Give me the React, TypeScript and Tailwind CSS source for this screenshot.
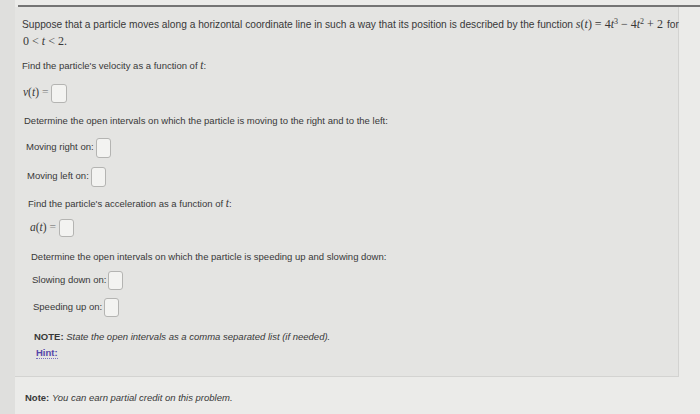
import React from "react";

const Box = ({ w = 15, h = 19 }: { w?: number; h?: number }) => (
  <span
    className="inline-block bg-[#f3f3f1] border border-[#b4b4b2] rounded-[3px] align-middle"
    style={{ width: w, height: h }}
  />
);

const M = ({ children }: { children: React.ReactNode }) => (
  <span className="font-['Liberation_Serif',serif] italic text-[11.5px]">{children}</span>
);
const R = ({ children }: { children: React.ReactNode }) => (
  <span className="font-['Liberation_Serif',serif] text-[11.5px]">{children}</span>
);
const M2 = ({ children }: { children: React.ReactNode }) => (
  <span className="font-['Liberation_Serif',serif] italic text-[12px]">{children}</span>
);
const R2 = ({ children }: { children: React.ReactNode }) => (
  <span className="font-['Liberation_Serif',serif] text-[12px]">{children}</span>
);

export default function App() {
  return (
    <div className="w-[700px] h-[414px] bg-[#ebebe9] flex overflow-hidden font-['Liberation_Sans',Arial,sans-serif] text-[#383838] text-[9.5px]">
      <div className="w-[15px] shrink-0 bg-[#dfdfdd]" />
      <div className="flex-1 flex flex-col">
        <div className="h-[5px]" />
        <div className="h-[1.5px] bg-[#747474] ml-[3px]" />
        <div className="w-[664px] h-[370px] bg-[#e4e4e2] border-r border-b border-[#d3d3d1] pt-[9px] pl-[7px] flex flex-col items-start">
          <div className="leading-[16px]">
            <div className="whitespace-nowrap text-[10.2px]">
              Suppose that a particle moves along a horizontal coordinate line in such a way that its position is described by the function{" "}
              <M2>s</M2>
              <R2>(</R2>
              <M2>t</M2>
              <R2>) = 4</R2>
              <M2>t</M2>
              <sup className="font-['Liberation_Serif',serif] text-[8px]">3</sup>
              <R2> − 4</R2>
              <M2>t</M2>
              <sup className="font-['Liberation_Serif',serif] text-[8px]">2</sup>
              <R2> + 2</R2>
              <span className="ml-[4px]">for</span>
            </div>
            <div className="ml-[1px]">
              <R2>0 &lt; </R2>
              <M2>t</M2>
              <R2> &lt; 2.</R2>
            </div>
          </div>

          <div className="mt-[8px] leading-[14px]">
            Find the particle's velocity as a function of <M>t</M>:
          </div>

          <div className="mt-[11px] ml-[1px] h-[19px] flex items-center gap-[3px]">
            <span>
              <M>v</M>
              <R>(</R>
              <M>t</M>
              <R>)</R>
              <span className="font-['Liberation_Serif',serif] text-[11.5px] text-[#8a8a8a]"> =</span>
            </span>
            <Box w={16} />
          </div>

          <div className="mt-[11px] ml-[2px] leading-[14px]">
            Determine the open intervals on which the particle is moving to the right and to the left:
          </div>

          <div className="mt-[10px] ml-[4px] h-[20px] flex items-center gap-[2px]">
            <span>Moving right on:</span>
            <Box w={15} h={20} />
          </div>

          <div className="mt-[9px] ml-[5px] h-[20px] flex items-center gap-[2px]">
            <span>Moving left on:</span>
            <Box w={15} h={20} />
          </div>

          <div className="mt-[9px] ml-[6px] leading-[14px]">
            Find the particle's acceleration as a function of <M>t</M>:
          </div>

          <div className="mt-[8px] ml-[8px] h-[18px] flex items-center gap-[3px]">
            <span>
              <M>a</M>
              <R>(</R>
              <M>t</M>
              <R>)</R>
              <span className="font-['Liberation_Serif',serif] text-[11.5px] text-[#8a8a8a]"> =</span>
            </span>
            <Box w={15} h={18} />
          </div>

          <div className="mt-[13px] ml-[9px] leading-[14px]">
            Determine the open intervals on which the particle is speeding up and slowing down:
          </div>

          <div className="mt-[7px] ml-[10px] h-[19px] flex items-center gap-[2px]">
            <span>Slowing down on:</span>
            <Box w={15} h={19} />
          </div>

          <div className="mt-[8px] ml-[11px] h-[19px] flex items-center gap-[2px]">
            <span>Speeding up on:</span>
            <Box w={15} h={19} />
          </div>

          <div className="mt-[13px] ml-[12px] leading-[14px]">
            <span className="font-bold">NOTE:</span>{" "}
            <span className="italic">State the open intervals as a comma separated list (if needed).</span>
          </div>

          <div className="mt-[2px] ml-[14px] leading-[14px]">
            <span className="font-bold text-[#5446a8] border-b border-dotted border-[#7a70c0]">Hint:</span>
          </div>
        </div>

        <div className="mt-[14px] ml-[10px] leading-[14px]">
          <span className="font-bold">Note:</span>{" "}
          <span className="italic">You can earn partial credit on this problem.</span>
        </div>
      </div>
    </div>
  );
}
